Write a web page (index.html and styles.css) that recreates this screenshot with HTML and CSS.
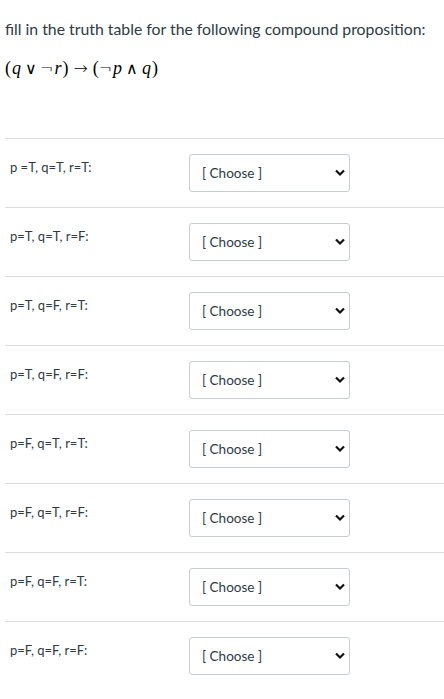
FILE: index.html
```html
<!DOCTYPE html>
<html>
<head>
<meta charset="utf-8">
<link rel="stylesheet" href="styles.css">
</head>
<body>
<div class="page">
  <p class="prompt">fill in the truth table for the following compound proposition:</p>
  <p class="math"><span class="rm">(</span><i>q</i><span class="op">∨</span><span class="neg">¬</span><i>r</i><span class="rm">)</span><span class="arrow">→</span><span class="rm">(</span><span class="neg">¬</span><i>p</i><span class="op">∧</span><i>q</i><span class="rm">)</span></p>
  <div class="table">
    <div class="row"><div class="label">p =T, q=T, r=T:</div><div class="sel"><select><option>[ Choose ]</option></select><svg class="chev" viewBox="0 0 10 8" width="10" height="8"><path d="M1 1.5 L5 5.5 L9 1.5" fill="none" stroke="#111" stroke-width="2.2"/></svg></div></div>
    <div class="row"><div class="label">p=T, q=T, r=F:</div><div class="sel"><select><option>[ Choose ]</option></select><svg class="chev" viewBox="0 0 10 8" width="10" height="8"><path d="M1 1.5 L5 5.5 L9 1.5" fill="none" stroke="#111" stroke-width="2.2"/></svg></div></div>
    <div class="row"><div class="label">p=T, q=F, r=T:</div><div class="sel"><select><option>[ Choose ]</option></select><svg class="chev" viewBox="0 0 10 8" width="10" height="8"><path d="M1 1.5 L5 5.5 L9 1.5" fill="none" stroke="#111" stroke-width="2.2"/></svg></div></div>
    <div class="row"><div class="label">p=T, q=F, r=F:</div><div class="sel"><select><option>[ Choose ]</option></select><svg class="chev" viewBox="0 0 10 8" width="10" height="8"><path d="M1 1.5 L5 5.5 L9 1.5" fill="none" stroke="#111" stroke-width="2.2"/></svg></div></div>
    <div class="row"><div class="label">p=F, q=T, r=T:</div><div class="sel"><select><option>[ Choose ]</option></select><svg class="chev" viewBox="0 0 10 8" width="10" height="8"><path d="M1 1.5 L5 5.5 L9 1.5" fill="none" stroke="#111" stroke-width="2.2"/></svg></div></div>
    <div class="row"><div class="label">p=F, q=T, r=F:</div><div class="sel"><select><option>[ Choose ]</option></select><svg class="chev" viewBox="0 0 10 8" width="10" height="8"><path d="M1 1.5 L5 5.5 L9 1.5" fill="none" stroke="#111" stroke-width="2.2"/></svg></div></div>
    <div class="row"><div class="label">p=F, q=F, r=T:</div><div class="sel"><select><option>[ Choose ]</option></select><svg class="chev" viewBox="0 0 10 8" width="10" height="8"><path d="M1 1.5 L5 5.5 L9 1.5" fill="none" stroke="#111" stroke-width="2.2"/></svg></div></div>
    <div class="row"><div class="label">p=F, q=F, r=F:</div><div class="sel"><select><option>[ Choose ]</option></select><svg class="chev" viewBox="0 0 10 8" width="10" height="8"><path d="M1 1.5 L5 5.5 L9 1.5" fill="none" stroke="#111" stroke-width="2.2"/></svg></div></div>
  </div>
</div>
</body>
</html>
```
FILE: styles.css
```css
html, body {
  margin: 0;
  padding: 0;
  background: #fff;
}
.page {
  padding: 0 0 0 5px;
  font-family: Lato, "Liberation Sans", sans-serif;
  color: #2d3b45;
}
.prompt {
  margin: 0;
  padding-top: 18px;
  font-size: 15.8px;
  line-height: 21px;
  color: #2d3b45;
}
.math {
  margin: 0;
  margin-top: 16px;
  height: 26px;
  line-height: 26px;
  font-family: "Liberation Serif", serif;
  font-size: 18px;
  color: #000;
  white-space: nowrap;
}
.math i {
  font-style: italic;
  padding: 0 1px;
}
.math .op {
  font-family: "DejaVu Sans", sans-serif;
  font-weight: 200;
  font-size: 16px;
  padding: 0 3px;
}
.math .neg {
  font-family: "DejaVu Sans", sans-serif;
  font-weight: 200;
  font-size: 16px;
}
.math .arrow {
  font-family: "DejaVu Sans", sans-serif;
  font-weight: 200;
  font-size: 17px;
  padding: 0 5px;
}
.table {
  margin-top: 57px;
}
.row {
  display: grid;
  grid-template-columns: 184px 161px;
  border-top: 1px solid #dcdcdc;
  padding: 15px 0 15px 0;
}
.label {
  padding: 5px 0 0 5px;
  font-size: 13px;
  line-height: 16px;
  color: #2d3b45;
}
.sel {
  position: relative;
  width: 161px;
  height: 38px;
}
select {
  appearance: none;
  -webkit-appearance: none;
  box-sizing: border-box;
  width: 161px;
  height: 38px;
  margin: 0;
  padding: 0 0 0 12px;
  border: 1px solid #c7cdd1;
  border-radius: 3px;
  background: #fff;
  font-family: Lato, "Liberation Sans", sans-serif;
  font-size: 13.5px;
  color: #2d3b45;
}
.chev {
  position: absolute;
  right: 5px;
  top: 15px;
  pointer-events: none;
}
```
